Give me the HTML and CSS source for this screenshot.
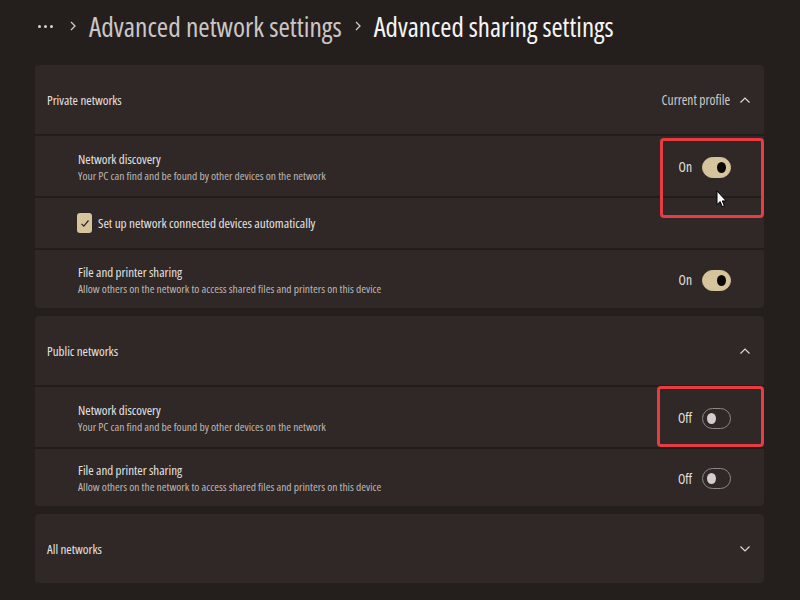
FILE: index.html
```html
<!DOCTYPE html>
<html lang="en">
<head>
  <meta charset="UTF-8">
  <title>Advanced sharing settings</title>
  <link rel="stylesheet" href="styles.css">
</head>
<body>
  <div class="page">
    <nav class="crumbs">
      <span class="more"><i></i><i></i><i></i></span>
      <svg class="sep" width="8" height="12" viewBox="0 0 8 12"><polyline points="2,2 6,6 2,10" fill="none" stroke="#cfcac9" stroke-width="1.3"/></svg>
      <span class="crumb">Advanced network settings</span>
      <svg class="sep" width="8" height="12" viewBox="0 0 8 12"><polyline points="2,2 6,6 2,10" fill="none" stroke="#cfcac9" stroke-width="1.3"/></svg>
      <span class="crumb current">Advanced sharing settings</span>
    </nav>

    <!-- Private -->
    <section class="card">
      <div class="card-head">
        <span class="head-title">Private networks</span>
        <span class="head-meta">Current profile
          <svg class="caret" width="12" height="8" viewBox="0 0 12 8"><polyline points="1.5,6.5 6,2 10.5,6.5" fill="none" stroke="#ddd8d7" stroke-width="1.2"/></svg>
        </span>
      </div>
      <div class="row">
        <div class="row-text">
          <div class="row-title">Network discovery</div>
          <div class="row-desc">Your PC can find and be found by other devices on the network</div>
        </div>
        <div class="row-ctl"><span class="state">On</span><span class="toggle on"><i></i></span></div>
        <span class="mark mark-private"></span>
        <svg class="cursor" width="11" height="18" viewBox="0 0 11 18"><path d="M1,1 L1,14.5 L4.2,11.6 L6.3,16.6 L8.3,15.7 L6.3,10.9 L10.2,10.9 Z" fill="#fff" stroke="#000" stroke-width="1" stroke-linejoin="round"/></svg>
      </div>
      <div class="row row-check">
        <span class="check">
          <svg width="10" height="9" viewBox="0 0 10 9"><polyline points="1.5,4.8 3.8,7.2 8.5,1.5" fill="none" stroke="#2a2322" stroke-width="1.2"/></svg>
        </span>
        <span class="check-label">Set up network connected devices automatically</span>
      </div>
      <div class="row row-last">
        <div class="row-text">
          <div class="row-title">File and printer sharing</div>
          <div class="row-desc">Allow others on the network to access shared files and printers on this device</div>
        </div>
        <div class="row-ctl"><span class="state">On</span><span class="toggle on"><i></i></span></div>
      </div>
    </section>

    <!-- Public -->
    <section class="card">
      <div class="card-head">
        <span class="head-title">Public networks</span>
        <span class="head-meta">
          <svg class="caret" width="12" height="8" viewBox="0 0 12 8"><polyline points="1.5,6.5 6,2 10.5,6.5" fill="none" stroke="#ddd8d7" stroke-width="1.2"/></svg>
        </span>
      </div>
      <div class="row">
        <div class="row-text">
          <div class="row-title">Network discovery</div>
          <div class="row-desc">Your PC can find and be found by other devices on the network</div>
        </div>
        <div class="row-ctl"><span class="state">Off</span><span class="toggle"><i></i></span></div>
        <span class="mark mark-public"></span>
      </div>
      <div class="row row-short">
        <div class="row-text">
          <div class="row-title">File and printer sharing</div>
          <div class="row-desc">Allow others on the network to access shared files and printers on this device</div>
        </div>
        <div class="row-ctl"><span class="state">Off</span><span class="toggle"><i></i></span></div>
      </div>
    </section>

    <!-- All -->
    <section class="card">
      <div class="card-head">
        <span class="head-title">All networks</span>
        <span class="head-meta">
          <svg class="caret" width="12" height="8" viewBox="0 0 12 8"><polyline points="1.5,1.5 6,6 10.5,1.5" fill="none" stroke="#ddd8d7" stroke-width="1.2"/></svg>
        </span>
      </div>
    </section>
  </div>
</body>
</html>
```

FILE: styles.css
```css
body {
  margin: 0;
  background: #241e1d;
  font-family: "Open Sans", "Noto Sans", sans-serif;
  font-stretch: 75%;
  color: #e6e2e1;
}
.page {
  padding: 0 36px 0 35px;
}

/* breadcrumb */
.crumbs {
  display: flex;
  align-items: center;
  height: 52px;
  margin-bottom: 13px;
  padding-left: 3px;
}
.more {
  display: flex;
  gap: 3px;
  margin-right: 16px;
}
.more i {
  width: 3px;
  height: 3px;
  border-radius: 50%;
  background: #d8d3d2;
}
.sep {
  margin-right: 12px;
}
.crumb {
  font-size: 27.5px;
  color: #cbc6c5;
  margin-right: 12px;
}
.crumb.current {
  font-size: 27px;
  color: #f6f4f3;
  font-weight: 500;
}

/* cards */
.card {
  display: flex;
  flex-direction: column;
  gap: 2px;
  background: #221c1b;
  border-radius: 4px;
  margin-bottom: 8px;
}
.card-head {
  display: flex;
  align-items: center;
  justify-content: space-between;
  height: 69px;
  padding: 0 13px 0 12px;
  background: #2f2827;
  border-radius: 4px 4px 0 0;
  font-size: 13px;
}
.card:last-child .card-head {
  border-radius: 4px;
}
.head-meta {
  display: flex;
  align-items: center;
  gap: 9px;
  color: #cfcac9;
  font-size: 13.5px;
}
.row {
  position: relative;
  display: flex;
  align-items: center;
  justify-content: space-between;
  height: 60px;
  padding: 0 33px 0 43px;
  background: #2f2827;
}
.row-last {
  height: 58px;
  border-radius: 0 0 4px 4px;
}
.row-short {
  height: 57px;
  border-radius: 0 0 4px 4px;
}
.row-check {
  height: 50px;
  justify-content: flex-start;
  gap: 6px;
  padding-left: 42px;
}
.row-title {
  font-size: 13px;
  line-height: 18px;
}
.row-desc {
  font-size: 11.5px;
  line-height: 15px;
  color: #bdb7b6;
}
.row-ctl {
  display: flex;
  align-items: center;
  gap: 10px;
  margin-top: 2px;
}
.state {
  font-size: 13.5px;
  color: #e6e2e1;
}

/* toggle */
.toggle {
  display: flex;
  align-items: center;
  box-sizing: border-box;
  width: 29px;
  height: 21px;
  padding: 0 4px;
  border: 1.5px solid #8d8786;
  border-radius: 11px;
}
.toggle i {
  width: 9px;
  height: 11px;
  border-radius: 50%;
  background: #d2cecd;
}
.toggle.on {
  justify-content: flex-end;
  background: #d6c59c;
  border-color: #d6c59c;
}
.toggle.on i {
  background: #0b0908;
}

/* checkbox */
.check {
  display: flex;
  align-items: center;
  justify-content: center;
  width: 15px;
  height: 20px;
  border-radius: 3px;
  background: #d6c59c;
}
.check-label {
  font-size: 13.2px;
}

/* overlays */
.mark {
  position: absolute;
  box-sizing: border-box;
  border: 3px solid #e63c42;
  border-radius: 4px;
  z-index: 2;
}
.mark-private {
  left: 625px;
  top: 2px;
  width: 104px;
  height: 80px;
}
.mark-public {
  left: 622px;
  top: -1px;
  width: 107px;
  height: 61px;
}
.cursor {
  position: absolute;
  left: 681px;
  top: 54px;
  z-index: 3;
}
```
